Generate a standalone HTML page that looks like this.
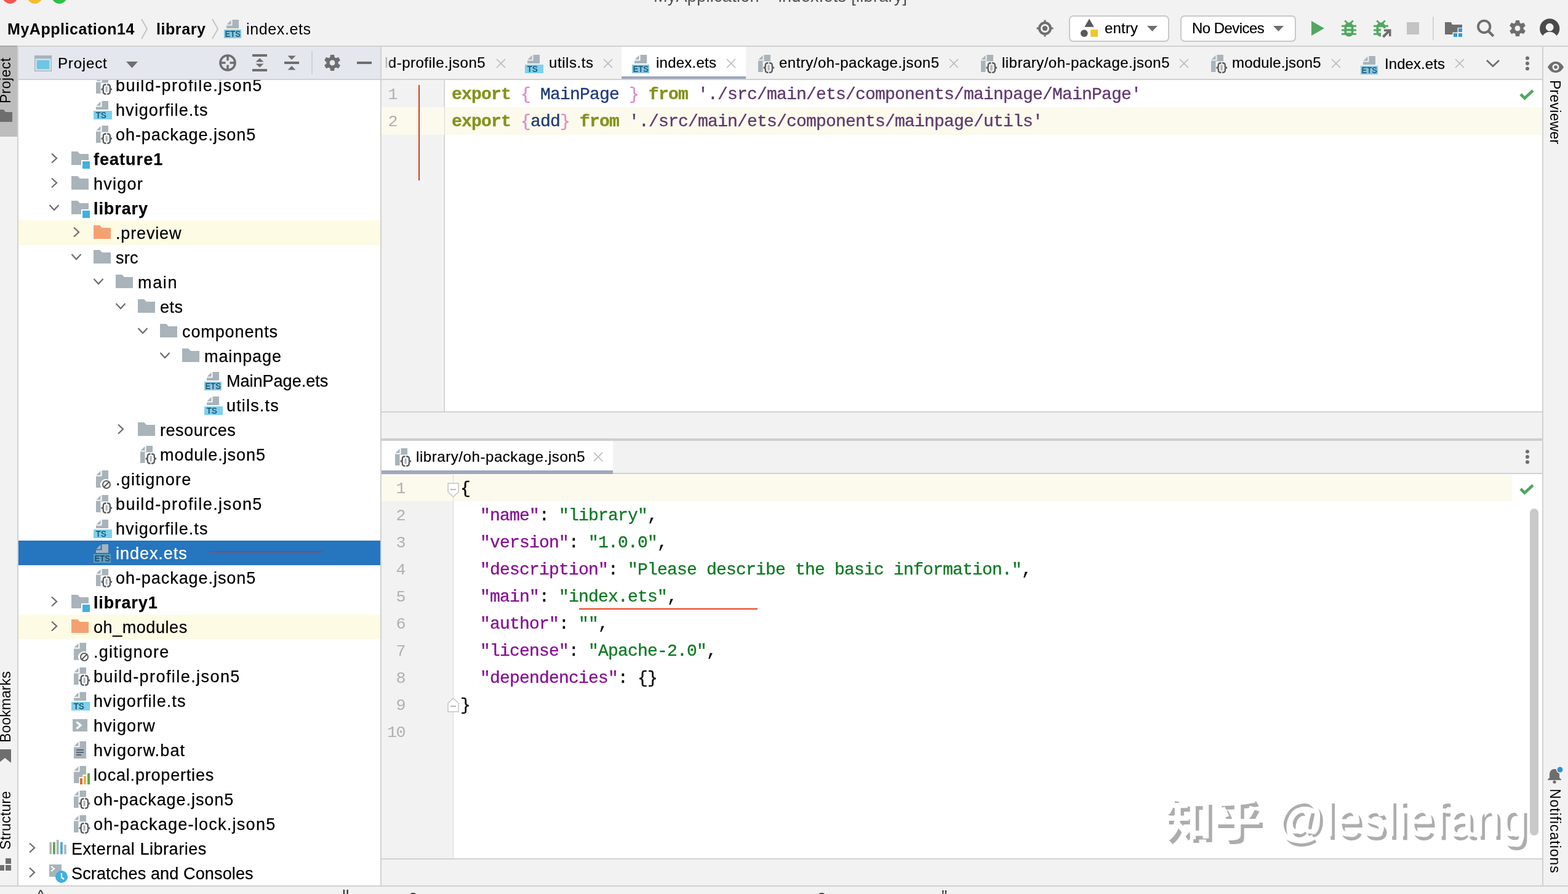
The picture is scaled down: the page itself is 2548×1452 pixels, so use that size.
<!DOCTYPE html>
<html><head><meta charset="utf-8"><title>DevEco</title><style>
html,body{margin:0;padding:0}
body{width:2548px;height:1452px;overflow:hidden;position:relative;background:#f2f2f2;filter:opacity(1);font-family:"Liberation Sans",sans-serif;color:#000}
.t{position:absolute;white-space:nowrap;transform:translateY(-50%);line-height:1;font-size:26px}
.b{font-weight:bold}
.w{color:#fff}
.ic{position:absolute;overflow:visible}
.hl{position:absolute;background:#d1d1d1}
.vl{position:absolute;background:#d1d1d1}
.title{color:#4f4f4f;font-size:27px}
.nav{font-size:25px}
.tb{font-size:24px;-webkit-text-stroke:0.200px}
.ui{font-size:24px;-webkit-text-stroke:0.200px}
.tree{font-size:27px;margin-top:1px;-webkit-text-stroke:0.250px}
.strip{font-size:23px}
.combo{position:absolute;box-sizing:border-box;background:#fff;border:2px solid #c8c8c8;border-radius:7px}
#tree{position:absolute;left:30px;top:130px;width:588px;height:1308px;overflow:hidden}
#tabs1{position:absolute;left:620px;top:76px;width:1886px;height:52px;overflow:hidden}
#tabs2{position:absolute;left:620px;top:716px;width:1886px;height:54px;overflow:hidden}
#ed1{position:absolute;left:620px;top:130px;width:1886px;height:538px;background:#fff;overflow:hidden}
#ed2{position:absolute;left:620px;top:771px;width:1886px;height:623px;background:#fff;overflow:hidden}
.ln{position:absolute;transform:translateY(-50%);line-height:1;font-family:"Liberation Mono",monospace;font-size:26.660px;letter-spacing:-1.500px;color:#b0b0b0;text-align:right}
.code{position:absolute;white-space:pre;transform:translateY(-50%);line-height:1;font-family:"Liberation Mono",monospace;font-size:28px;letter-spacing:-0.803px;color:#080808;-webkit-text-stroke:0.350px}
.code i{font-style:normal}
.k{color:#85911b;font-weight:bold}
.br{color:#e18cc4}
.id{color:#1f3a7a}
.s{color:#5f3a6e}
.jk{color:#871094}
.js{color:#0f7a24}
.wm{font-size:76px;color:#fff;text-shadow:5.500px 6px 0 #adadad;-webkit-text-stroke:1.600px #fff;transform:translateY(-50%) scaleY(1.08)}
#bottom{position:absolute;left:0;top:1440px;width:2548px;height:12px;overflow:hidden}
#bottom span{position:absolute;top:2px;font-size:26px;line-height:1;color:#333}
</style></head><body>

<svg width="0" height="0" style="position:absolute">
<defs>
<symbol id="i-folder" viewBox="0 0 32 32"><path d="M2 4h10.2l3.6 4H30v18H2z" fill="#a9b3ba"/></symbol>
<symbol id="i-folder-o" viewBox="0 0 32 32"><path d="M2 4h10.2l3.6 4H30v18H2z" fill="#f4a171"/></symbol>
<symbol id="i-module" viewBox="0 0 32 32"><path d="M2 4h10.2l3.6 4H30v10H18v8H2z" fill="#a9b3ba"/><rect x="20" y="20" width="12" height="12" fill="#3fb1e0"/></symbol>
<symbol id="i-sheet" viewBox="0 0 32 32"><path d="M11.500 2.800 4.500 9.800h7z" fill="#a9b3ba"/><path d="M13.500 2v9.500H4V30h20V2z" fill="#a9b3ba"/></symbol>
<symbol id="i-json" viewBox="0 0 32 32"><path d="M11.500 2.800 4.500 9.800h7z" fill="#a9b3ba"/><path d="M13.500 2v9.500H4V30h7.500V12.600H24V2z" fill="#a9b3ba"/>
 <path d="M20.500 15.300c-3.200 0-4.700 1-4.700 3.500v2.200c0 1.300-1 2-3.300 2 2.300 0 3.300.700 3.300 2v2.200c0 2.500 1.500 3.500 4.700 3.500M22.100 15.300c3.200 0 4.700 1 4.700 3.500v2.200c0 1.300 1 2 3.300 2-2.300 0-3.300.700-3.300 2v2.200c0 2.500-1.500 3.500-4.700 3.500" fill="none" stroke="#5a5a5a" stroke-width="2.400"/><path d="M19.500 18.500h3.200v9h-3.200z" fill="#aab4c0"/></symbol>
<symbol id="i-ts" viewBox="0 0 32 32"><path d="M11.500 2.800 4.500 9.800h7z" fill="#a9b3ba"/><path d="M13.500 2v9.500H4V16h20V2z" fill="#a9b3ba"/><rect x="0" y="18" width="30" height="14" fill="#7fd0ee"/>
 <text x="3.500" y="30" font-family="Liberation Sans, sans-serif" font-weight="bold" font-size="14.500" fill="#1d5f7c" textLength="17.500" lengthAdjust="spacingAndGlyphs">TS</text></symbol>
<symbol id="i-ets" viewBox="0 0 32 32"><path d="M11.500 2.800 4.500 9.800h7z" fill="#a9b3ba"/><path d="M13.500 2v9.500H4V16h20V2z" fill="#a9b3ba"/><rect x="0" y="18" width="28" height="14" fill="#89c6e0"/>
 <text x="1.500" y="30" font-family="Liberation Sans, sans-serif" font-weight="bold" font-size="14.500" fill="#1d5f7c" textLength="25.500" lengthAdjust="spacingAndGlyphs">ETS</text></symbol>
<symbol id="i-ets-sel" viewBox="0 0 32 32"><path d="M11.500 2.800 4.500 9.800h7z" fill="#a9b3ba"/><path d="M13.500 2v9.500H4V16h20V2z" fill="#a9b3ba"/><rect x="0" y="18" width="28" height="14" fill="#5e9fc0"/>
 <text x="1.500" y="30" font-family="Liberation Sans, sans-serif" font-weight="bold" font-size="14.500" fill="#1f4e6a" textLength="25.500" lengthAdjust="spacingAndGlyphs">ETS</text></symbol>
<symbol id="i-ignore" viewBox="0 0 32 32"><path d="M11.500 2.800 4.500 9.800h7z" fill="#a9b3ba"/><path d="M13.500 2v9.500H4V30h8.500a9 9 0 0 1 11.500-13V2z" fill="#a9b3ba"/>
 <circle cx="21" cy="25" r="6" fill="#fff" stroke="#5a5a5a" stroke-width="2"/><path d="M17 29l8-8" stroke="#5a5a5a" stroke-width="2.200"/></symbol>
<symbol id="i-shell" viewBox="0 0 32 32"><rect x="2" y="6" width="24" height="20" fill="#a9b3ba"/><path d="M8.500 10.500l6.500 5.500-6.500 5.500" fill="none" stroke="#fff" stroke-width="3.200"/></symbol>
<symbol id="i-text" viewBox="0 0 32 32"><path d="M11.500 2.800 4.500 9.800h7z" fill="#a9b3ba"/><path d="M13.500 2v9.500H4V30h20V2z" fill="#a9b3ba"/><path d="M8 15h12v2H8zM8 19h12v2H8zM8 23h8v2H8z" fill="#5a6670"/></symbol>
<symbol id="i-props" viewBox="0 0 32 32"><path d="M11.500 2.800 4.500 9.800h7z" fill="#a9b3ba"/><path d="M13.500 2v9.500H4V30h8.500V20h6v-4h5.500V2z" fill="#a9b3ba"/>
 <rect x="14" y="22" width="4" height="10" fill="#e0692d"/><rect x="20" y="18" width="4" height="14" fill="#f2b04a"/><rect x="26" y="14" width="4" height="18" fill="#62a744"/></symbol>
<symbol id="i-libs" viewBox="0 0 32 32"><rect x="2.500" y="5.700" width="3.500" height="19.700" fill="#a9b3ba"/><rect x="8" y="5.700" width="3.800" height="19.700" fill="#62a744"/><rect x="13.800" y="2" width="3.800" height="23.400" fill="#a9b3ba"/><rect x="20" y="5.700" width="3.800" height="19.700" fill="#4aa7d8"/><rect x="26.300" y="10" width="3.400" height="15.400" fill="#a9b3ba"/></symbol>
<symbol id="i-scratch" viewBox="0 0 32 32"><path d="M2 2h20v12h-6v8H2z" fill="#a9b3ba"/><path d="M5 5l5 4-5 4" fill="none" stroke="#fff" stroke-width="2"/><circle cx="22" cy="22" r="10" fill="#3fb1e0"/><path d="M22 16v7l4 3" fill="none" stroke="#fff" stroke-width="2.200"/></symbol>
<symbol id="i-chev-r" viewBox="0 0 32 32"><path d="M12 8.500l8 7.500-8 7.500" fill="none" stroke="#6e6e6e" stroke-width="2.300"/></symbol>
<symbol id="i-chev-d" viewBox="0 0 32 32"><path d="M8.500 12l7.500 8 7.500-8" fill="none" stroke="#6e6e6e" stroke-width="2.300"/></symbol>
<symbol id="i-close" viewBox="0 0 16 16"><path d="M1 1l14 14M15 1 1 15" stroke="#b8b8b8" stroke-width="1.600" fill="none"/></symbol>
<symbol id="i-gear" viewBox="0 0 32 32"><path fill="#6e6e6e" fill-rule="evenodd" stroke="#6e6e6e" stroke-width="1.500" stroke-linejoin="round" d="M12.17 5.48L12.99 0.49L19.01 0.49L19.83 5.48L23.20 7.42L27.92 5.63L30.94 10.86L27.03 14.06L27.03 17.94L30.94 21.14L27.92 26.37L23.20 24.58L19.83 26.52L19.01 31.51L12.99 31.51L12.17 26.52L8.80 24.58L4.08 26.37L1.06 21.14L4.97 17.94L4.97 14.06L1.06 10.86L4.08 5.63L8.80 7.42zM16 9.800a6.200 6.200 0 1 0 0 12.400 6.200 6.200 0 0 0 0-12.400z"/></symbol>
</defs></svg>
<div id="titlebar"></div>
<div style="position:absolute;left:3.5px;top:-19.300px;width:25px;height:25px;border-radius:50%;background:#f25850"></div>
<div style="position:absolute;left:43.5px;top:-19.300px;width:25px;height:25px;border-radius:50%;background:#f7bc2d"></div>
<div style="position:absolute;left:83.5px;top:-19.300px;width:25px;height:25px;border-radius:50%;background:#2ac33f"></div>
<span class="t title" id="t0" style="left:1062px;top:-6px;letter-spacing:0.29px">MyApplication – index.ets [library]</span>
<span class="t nav b" id="t1" style="left:12px;top:47px;letter-spacing:0.55px">MyApplication14</span>
<svg class="ic" style="left:228px;top:30px" width="14" height="34"><path d="M2 1l9 16-9 16" fill="none" stroke="#c4c4c4" stroke-width="2"/></svg>
<span class="t nav b" id="t2" style="left:254px;top:47px;letter-spacing:0.57px">library</span>
<svg class="ic" style="left:343px;top:30px" width="14" height="34"><path d="M2 1l9 16-9 16" fill="none" stroke="#c4c4c4" stroke-width="2"/></svg>
<svg class="ic" style="left:364px;top:30px" width="32" height="32" ><use href="#i-ets"/></svg>
<span class="t nav" id="t3" style="left:400px;top:47px;letter-spacing:0.63px">index.ets</span>
<svg class="ic" style="left:1682px;top:30px" width="32" height="32" viewBox="0 0 32 32"><circle cx="16" cy="16" r="9" fill="none" stroke="#6e6e6e" stroke-width="4"/><circle cx="16" cy="16" r="4.100" fill="#6e6e6e"/><path d="M16 2.500v3M16 26.500v3M2.500 16h3M26.500 16h3" stroke="#6e6e6e" stroke-width="3"/></svg>
<div class="combo" style="left:1736.500px;top:24.500px;width:163px;height:43px"></div>
<svg class="ic" style="left:1755px;top:30px" width="32" height="32" viewBox="0 0 32 32"><path d="M15 .600l7.800 13.200H7.300z" fill="#58585a"/><circle cx="6.800" cy="24.100" r="5.900" fill="#58585a"/><rect x="17.200" y="18" width="11.800" height="11.800" fill="#f4c430"/></svg>
<span class="t tb" id="t4" style="left:1795px;top:46px;letter-spacing:0.18px">entry</span>
<svg class="ic" style="left:1863.500px;top:42.400px" width="17" height="9"><path d="M0 0h17l-8.500 9z" fill="#6e6e6e"/></svg>
<div class="combo" style="left:1918px;top:24.500px;width:187.500px;height:43px"></div>
<span class="t tb" id="t5" style="left:1937px;top:46px;letter-spacing:-0.54px">No Devices</span>
<svg class="ic" style="left:2069px;top:42.400px" width="17" height="9"><path d="M0 0h17l-8.500 9z" fill="#6e6e6e"/></svg>
<svg class="ic" style="left:2130px;top:33px" width="24" height="26"><path d="M1 1l21 12L1 25z" fill="#53a762"/></svg>
<svg class="ic" style="left:2180px;top:32px" width="24" height="28" viewBox="0 0 24 28"><g fill="#53a762"><path d="M5.300 1.500l5.500 5.500M18.700 1.500l-5.500 5.500" stroke="#53a762" stroke-width="3" fill="none"/><path d="M4.500 12a7.500 7.500 0 0 1 15 0v8a7.500 7.500 0 0 1-15 0z"/><path d="M0 8.700h24v3H0zM0 15.500h24v3H0zM0 21.800h24v3H0z"/></g><path d="M8.200 12h7.500v2.800H8.200zM8.200 18.400h7.500v2.800H8.200z" fill="#d6f3da"/></svg>
<svg class="ic" style="left:2232px;top:32px" width="30" height="30" viewBox="0 0 30 30"><g fill="#53a762"><path d="M5.300 1.500l5.500 5.500M18.700 1.500l-5.500 5.500" stroke="#53a762" stroke-width="3" fill="none"/><path d="M4.500 12a7.500 7.500 0 0 1 15 0v8a7.500 7.500 0 0 1-15 0z"/><path d="M0 8.700h24v3H0zM0 15.500h24v3H0zM0 21.800h24v3H0z"/></g><path d="M8.200 12h7.500v2.800H8.200zM8.200 18.400h7.500v2.800H8.200z" fill="#d6f3da"/><rect x="12" y="14" width="18" height="16" fill="#f2f2f2"/><path d="M15.500 28l11-11" stroke="#6e6e6e" stroke-width="4"/><path d="M17 15.500h11.500V27h-3.500v-8H17z" fill="#6e6e6e"/></svg>
<div style="position:absolute;left:2286px;top:36px;width:20px;height:20px;background:#c4c4c4"></div>
<div style="position:absolute;left:2328px;top:27px;width:2px;height:38px;background:#d4d4d4"></div>
<svg class="ic" style="left:2348px;top:36px" width="28" height="24" viewBox="0 0 28 24"><path d="M0 0h10l2 4h16v5H20.500v7.500H12.500V20H0z" fill="#6e6e6e"/><g fill="#3b97cf"><rect x="22" y="10" width="6" height="6"/><rect x="14" y="18" width="6" height="6"/><rect x="22" y="18" width="6" height="6"/></g></svg>
<svg class="ic" style="left:2398px;top:30px" width="32" height="32" viewBox="0 0 32 32"><circle cx="13.700" cy="13.300" r="9.700" fill="none" stroke="#6e6e6e" stroke-width="3.800"/><path d="M20.800 20.800l8 8" stroke="#6e6e6e" stroke-width="4.200"/></svg>
<svg class="ic" style="left:2453px;top:33px" width="26" height="26" ><use href="#i-gear"/></svg>
<svg class="ic" style="left:2502px;top:30px" width="33" height="33" viewBox="0 0 33 33"><defs><clipPath id="avc"><rect x="-2" y="-2" width="38" height="37"/></clipPath></defs><circle cx="16.200" cy="16.400" r="16.100" fill="#4a4a4a"/><g clip-path="url(#avc)" fill="#f2f2f2"><circle cx="16.200" cy="14.200" r="6.400"/><ellipse cx="16.200" cy="33.400" rx="12.500" ry="11.600"/></g></svg>
<div class="hl" style="left:0;top:74px;width:2548px;height:2px"></div>
<div style="position:absolute;left:0;top:76px;width:28px;height:1362px;background:#f2f2f2"></div>
<div style="position:absolute;left:0;top:76px;width:28px;height:146px;background:#bdbdbd"></div>
<div style="position:absolute;left:0;top:74px;width:28px;height:2px;background:#a9a9a9"></div>
<div class="vl" style="left:28px;top:76px;width:2px;height:1362px"></div>
<span class="t strip" id="t6" style="left:9px;top:168px;transform-origin:0 50%;transform:translateY(-50%) rotate(-90deg);letter-spacing:0.41px">Project</span>
<svg class="ic" style="left:-4px;top:176px" width="26" height="24"><path d="M0 2h10l3 4h11v16H0z" fill="#6e6e6e"/></svg>
<span class="t strip" id="t7" style="left:9px;top:1206px;transform-origin:0 50%;transform:translateY(-50%) rotate(-90deg);letter-spacing:0.08px">Bookmarks</span>
<svg class="ic" style="left:-2px;top:1217px" width="22" height="24"><path d="M0 0h20v22l-10-8-10 8z" fill="#6e6e6e"/></svg>
<span class="t strip" id="t8" style="left:9px;top:1380px;transform-origin:0 50%;transform:translateY(-50%) rotate(-90deg);letter-spacing:0.22px">Structure</span>
<svg class="ic" style="left:0px;top:1394px" width="22" height="22"><rect x="9" y="0" width="9" height="9" fill="#6e6e6e"/><rect x="0" y="11" width="7" height="9" fill="#6e6e6e"/><rect x="9" y="11" width="9" height="9" fill="#6e6e6e"/></svg>
<div style="position:absolute;left:30px;top:76px;width:588px;height:1362px;background:#fff"></div>
<div style="position:absolute;left:30px;top:76px;width:588px;height:52px;background:#e4e7ee"></div>
<div class="hl" style="left:30px;top:128px;width:588px;height:2px;background:#d0d2d8"></div>
<svg class="ic" style="left:56px;top:90px" width="28" height="26"><rect x="0" y="0" width="28" height="26" fill="#a9b3ba"/><rect x="2.500" y="6.500" width="23" height="17" fill="#6ec6e2" stroke="#dfe8ee" stroke-width="2"/></svg>
<span class="t ui" id="t9" style="left:94px;top:103px;letter-spacing:0.82px">Project</span>
<svg class="ic" style="left:205px;top:100px" width="20" height="11"><path d="M0 0h19l-9.500 10.500z" fill="#6e6e6e"/></svg>
<svg class="ic" style="left:355px;top:87px" width="30" height="30" viewBox="0 0 30 30"><circle cx="15" cy="15" r="12" fill="none" stroke="#6e6e6e" stroke-width="3.600"/><path d="M15 3v8.500M15 18.500v8.500M3 15h8.500M18.500 15h8.500" stroke="#6e6e6e" stroke-width="3.600"/></svg>
<svg class="ic" style="left:410px;top:88px" width="24" height="28" viewBox="0 0 24 28"><path d="M0 0h24v4H0zM0 24h24v4H0z" fill="#6e6e6e"/><path d="M12 6.500l6.500 6h-13zM12 21.500l6.500-6h-13z" fill="#6e6e6e"/></svg>
<svg class="ic" style="left:462px;top:88px" width="24" height="28" viewBox="0 0 24 28"><path d="M0 12h24v4H0z" fill="#6e6e6e"/><path d="M12 9l6.500-6.500h-13zM12 19l6.500 6.500h-13z" fill="#6e6e6e"/></svg>
<div style="position:absolute;left:506px;top:83px;width:2px;height:38px;background:#d0d2d8"></div>
<svg class="ic" style="left:527px;top:89px" width="26" height="26" ><use href="#i-gear"/></svg>
<div style="position:absolute;left:580px;top:100px;width:24px;height:4px;background:#6e6e6e"></div>
<div id="tree">
<svg class="ic" style="left:122px;top:-8px" width="32" height="32" ><use href="#i-json"/></svg>
<span class="t tree" id="t10" style="left:158px;top:8px;letter-spacing:1.43px">build-profile.json5</span>
<svg class="ic" style="left:122px;top:32px" width="32" height="32" ><use href="#i-ts"/></svg>
<span class="t tree" id="t11" style="left:158px;top:48px;letter-spacing:1.07px">hvigorfile.ts</span>
<svg class="ic" style="left:122px;top:72px" width="32" height="32" ><use href="#i-json"/></svg>
<span class="t tree" id="t12" style="left:158px;top:88px;letter-spacing:0.94px">oh-package.json5</span>
<svg class="ic" style="left:84px;top:112px" width="32" height="32" ><use href="#i-module"/></svg>
<svg class="ic" style="left:42px;top:111px" width="32" height="32" ><use href="#i-chev-r"/></svg>
<span class="t tree b" id="t13" style="left:122px;top:128px;letter-spacing:1.02px">feature1</span>
<svg class="ic" style="left:84px;top:152px" width="32" height="32" ><use href="#i-folder"/></svg>
<svg class="ic" style="left:42px;top:151px" width="32" height="32" ><use href="#i-chev-r"/></svg>
<span class="t tree" id="t14" style="left:122px;top:168px;letter-spacing:1.25px">hvigor</span>
<svg class="ic" style="left:84px;top:192px" width="32" height="32" ><use href="#i-module"/></svg>
<svg class="ic" style="left:42px;top:191px" width="32" height="32" ><use href="#i-chev-d"/></svg>
<span class="t tree b" id="t15" style="left:122px;top:208px;letter-spacing:0.91px">library</span>
<div style="position:absolute;left:0;top:228px;width:588px;height:40px;background:#fdfbe4"></div>
<svg class="ic" style="left:120px;top:232px" width="32" height="32" ><use href="#i-folder-o"/></svg>
<svg class="ic" style="left:78px;top:231px" width="32" height="32" ><use href="#i-chev-r"/></svg>
<span class="t tree" id="t16" style="left:158px;top:248px;letter-spacing:0.84px">.preview</span>
<svg class="ic" style="left:120px;top:272px" width="32" height="32" ><use href="#i-folder"/></svg>
<svg class="ic" style="left:78px;top:271px" width="32" height="32" ><use href="#i-chev-d"/></svg>
<span class="t tree" id="t17" style="left:158px;top:288px;letter-spacing:0.23px">src</span>
<svg class="ic" style="left:156px;top:312px" width="32" height="32" ><use href="#i-folder"/></svg>
<svg class="ic" style="left:114px;top:311px" width="32" height="32" ><use href="#i-chev-d"/></svg>
<span class="t tree" id="t18" style="left:194px;top:328px;letter-spacing:1.67px">main</span>
<svg class="ic" style="left:192px;top:352px" width="32" height="32" ><use href="#i-folder"/></svg>
<svg class="ic" style="left:150px;top:351px" width="32" height="32" ><use href="#i-chev-d"/></svg>
<span class="t tree" id="t19" style="left:230px;top:368px;letter-spacing:0.55px">ets</span>
<svg class="ic" style="left:228px;top:392px" width="32" height="32" ><use href="#i-folder"/></svg>
<svg class="ic" style="left:186px;top:391px" width="32" height="32" ><use href="#i-chev-d"/></svg>
<span class="t tree" id="t20" style="left:266px;top:408px;letter-spacing:0.89px">components</span>
<svg class="ic" style="left:264px;top:432px" width="32" height="32" ><use href="#i-folder"/></svg>
<svg class="ic" style="left:222px;top:431px" width="32" height="32" ><use href="#i-chev-d"/></svg>
<span class="t tree" id="t21" style="left:302px;top:448px;letter-spacing:0.91px">mainpage</span>
<svg class="ic" style="left:302px;top:472px" width="32" height="32" ><use href="#i-ets"/></svg>
<span class="t tree" id="t22" style="left:338px;top:488px;letter-spacing:0.01px">MainPage.ets</span>
<svg class="ic" style="left:302px;top:512px" width="32" height="32" ><use href="#i-ts"/></svg>
<span class="t tree" id="t23" style="left:338px;top:528px;letter-spacing:1.17px">utils.ts</span>
<svg class="ic" style="left:192px;top:552px" width="32" height="32" ><use href="#i-folder"/></svg>
<svg class="ic" style="left:150px;top:551px" width="32" height="32" ><use href="#i-chev-r"/></svg>
<span class="t tree" id="t24" style="left:230px;top:568px;letter-spacing:0.53px">resources</span>
<svg class="ic" style="left:194px;top:592px" width="32" height="32" ><use href="#i-json"/></svg>
<span class="t tree" id="t25" style="left:230px;top:608px;letter-spacing:0.94px">module.json5</span>
<svg class="ic" style="left:122px;top:632px" width="32" height="32" ><use href="#i-ignore"/></svg>
<span class="t tree" id="t26" style="left:158px;top:648px;letter-spacing:1.23px">.gitignore</span>
<svg class="ic" style="left:122px;top:672px" width="32" height="32" ><use href="#i-json"/></svg>
<span class="t tree" id="t27" style="left:158px;top:688px;letter-spacing:1.43px">build-profile.json5</span>
<svg class="ic" style="left:122px;top:712px" width="32" height="32" ><use href="#i-ts"/></svg>
<span class="t tree" id="t28" style="left:158px;top:728px;letter-spacing:1.07px">hvigorfile.ts</span>
<div style="position:absolute;left:0;top:748px;width:588px;height:40px;background:#2675bf"></div>
<svg class="ic" style="left:122px;top:752px" width="32" height="32" ><use href="#i-ets-sel"/></svg>
<span class="t tree w" id="t29" style="left:158px;top:768px;letter-spacing:0.96px">index.ets</span>
<div style="position:absolute;left:310px;top:765px;width:184px;height:2px;background:#c8323c"></div>
<svg class="ic" style="left:122px;top:792px" width="32" height="32" ><use href="#i-json"/></svg>
<span class="t tree" id="t30" style="left:158px;top:808px;letter-spacing:0.94px">oh-package.json5</span>
<svg class="ic" style="left:84px;top:832px" width="32" height="32" ><use href="#i-module"/></svg>
<svg class="ic" style="left:42px;top:831px" width="32" height="32" ><use href="#i-chev-r"/></svg>
<span class="t tree b" id="t31" style="left:122px;top:848px;letter-spacing:0.87px">library1</span>
<div style="position:absolute;left:0;top:868px;width:588px;height:40px;background:#fdfbe4"></div>
<svg class="ic" style="left:84px;top:872px" width="32" height="32" ><use href="#i-folder-o"/></svg>
<svg class="ic" style="left:42px;top:871px" width="32" height="32" ><use href="#i-chev-r"/></svg>
<span class="t tree" id="t32" style="left:122px;top:888px;letter-spacing:0.56px">oh_modules</span>
<svg class="ic" style="left:86px;top:912px" width="32" height="32" ><use href="#i-ignore"/></svg>
<span class="t tree" id="t33" style="left:122px;top:928px;letter-spacing:1.23px">.gitignore</span>
<svg class="ic" style="left:86px;top:952px" width="32" height="32" ><use href="#i-json"/></svg>
<span class="t tree" id="t34" style="left:122px;top:968px;letter-spacing:1.43px">build-profile.json5</span>
<svg class="ic" style="left:86px;top:992px" width="32" height="32" ><use href="#i-ts"/></svg>
<span class="t tree" id="t35" style="left:122px;top:1008px;letter-spacing:1.07px">hvigorfile.ts</span>
<svg class="ic" style="left:86px;top:1032px" width="32" height="32" ><use href="#i-shell"/></svg>
<span class="t tree" id="t36" style="left:122px;top:1048px;letter-spacing:1.13px">hvigorw</span>
<svg class="ic" style="left:86px;top:1072px" width="32" height="32" ><use href="#i-text"/></svg>
<span class="t tree" id="t37" style="left:122px;top:1088px;letter-spacing:1.15px">hvigorw.bat</span>
<svg class="ic" style="left:86px;top:1112px" width="32" height="32" ><use href="#i-props"/></svg>
<span class="t tree" id="t38" style="left:122px;top:1128px;letter-spacing:0.81px">local.properties</span>
<svg class="ic" style="left:86px;top:1152px" width="32" height="32" ><use href="#i-json"/></svg>
<span class="t tree" id="t39" style="left:122px;top:1168px;letter-spacing:0.94px">oh-package.json5</span>
<svg class="ic" style="left:86px;top:1192px" width="32" height="32" ><use href="#i-json"/></svg>
<span class="t tree" id="t40" style="left:122px;top:1208px;letter-spacing:1.25px">oh-package-lock.json5</span>
<svg class="ic" style="left:48px;top:1232px" width="32" height="32" ><use href="#i-libs"/></svg>
<svg class="ic" style="left:6px;top:1231px" width="32" height="32" ><use href="#i-chev-r"/></svg>
<span class="t tree" id="t41" style="left:86px;top:1248px;letter-spacing:0.54px">External Libraries</span>
<svg class="ic" style="left:48px;top:1272px" width="32" height="32" ><use href="#i-scratch"/></svg>
<svg class="ic" style="left:6px;top:1271px" width="32" height="32" ><use href="#i-chev-r"/></svg>
<span class="t tree" id="t42" style="left:86px;top:1288px;letter-spacing:0.14px">Scratches and Consoles</span>
</div>
<div class="vl" style="left:618px;top:76px;width:2px;height:1362px"></div>
<div id="tabs1">
<span class="t ui" id="t43" style="left:5px;top:26px;letter-spacing:0.50px">ld-profile.json5</span><svg class="ic" style="left:186px;top:19px" width="16" height="16" ><use href="#i-close"/></svg>
<svg class="ic" style="left:233px;top:11px" width="32" height="32" ><use href="#i-ts"/></svg><span class="t ui" id="t44" style="left:272px;top:26px;letter-spacing:0.56px">utils.ts</span><svg class="ic" style="left:360px;top:19px" width="16" height="16" ><use href="#i-close"/></svg>
<div style="position:absolute;left:390px;top:0;width:202px;height:52px;background:#fff"></div><div style="position:absolute;left:390px;top:48px;width:202px;height:5px;background:#9da7bc"></div><svg class="ic" style="left:407px;top:11px" width="32" height="32" ><use href="#i-ets"/></svg><span class="t ui" id="t45" style="left:446px;top:26px;letter-spacing:0.24px">index.ets</span><svg class="ic" style="left:560px;top:19px" width="16" height="16" ><use href="#i-close"/></svg>
<svg class="ic" style="left:608px;top:11px" width="32" height="32" ><use href="#i-json"/></svg><span class="t ui" id="t46" style="left:646px;top:26px;letter-spacing:0.50px">entry/oh-package.json5</span><svg class="ic" style="left:922px;top:19px" width="16" height="16" ><use href="#i-close"/></svg>
<svg class="ic" style="left:970px;top:11px" width="32" height="32" ><use href="#i-json"/></svg><span class="t ui" id="t47" style="left:1008px;top:26px;letter-spacing:0.48px">library/oh-package.json5</span><svg class="ic" style="left:1296px;top:19px" width="16" height="16" ><use href="#i-close"/></svg>
<svg class="ic" style="left:1344px;top:11px" width="32" height="32" ><use href="#i-json"/></svg><span class="t ui" id="t48" style="left:1382px;top:26px;letter-spacing:0.17px">module.json5</span><svg class="ic" style="left:1543px;top:19px" width="16" height="16" ><use href="#i-close"/></svg>
<svg class="ic" style="left:1591px;top:13px" width="32" height="32" ><use href="#i-ets"/></svg><span class="t ui" id="t49" style="left:1630px;top:28px;letter-spacing:0.08px">Index.ets</span><svg class="ic" style="left:1744px;top:19px" width="16" height="16" ><use href="#i-close"/></svg>
<div style="position:absolute;left:0;top:0;width:16px;height:52px;background:linear-gradient(90deg,#f2f2f2 30%,rgba(242,242,242,0))"></div>
<svg class="ic" style="left:1794px;top:20px" width="24" height="14"><path d="M2 2l10 9.500L22 2" fill="none" stroke="#6e6e6e" stroke-width="2.800"/></svg>
<svg class="ic" style="left:1858px;top:15px" width="8" height="28"><circle cx="4" cy="3.500" r="3" fill="#6e6e6e"/><circle cx="4" cy="12" r="3" fill="#6e6e6e"/><circle cx="4" cy="20.500" r="3" fill="#6e6e6e"/></svg>
</div>
<div class="hl" style="left:620px;top:128px;width:1886px;height:2px"></div>
<div id="ed1">
<div style="position:absolute;left:0;top:0;width:102px;height:538px;background:#f2f2f2"></div>
<div style="position:absolute;left:101px;top:0;width:2px;height:538px;background:#d6d6d6"></div>
<div style="position:absolute;left:0;top:44px;width:102px;height:45px;background:#fcfaed"></div>
<div style="position:absolute;left:103px;top:44px;width:1783px;height:45px;background:#fcfaed"></div>
<span class="ln" style="left:0;width:25px;top:24px">1</span><span class="ln" style="left:0;width:25px;top:68px">2</span>
<div style="position:absolute;left:60px;top:8px;width:2px;height:155px;background:#d8391a"></div>
<span class="code" style="left:114px;top:24px"><b class="k">export</b> <i class="br">{</i> <i class="id">MainPage</i> <i class="br">}</i> <b class="k">from</b> <i class="s">'./src/main/ets/components/mainpage/MainPage'</i></span>
<span class="code" style="left:114px;top:68px"><b class="k">export</b> <i class="br">{</i><i class="id">add</i><i class="br">}</i> <b class="k">from</b> <i class="s">'./src/main/ets/components/mainpage/utils'</i></span>
<svg class="ic" style="left:1849px;top:14px" width="24" height="19"><path d="M2 9l6.500 6.500L22 3" fill="none" stroke="#53a762" stroke-width="4.600"/></svg>
</div>
<div class="hl" style="left:620px;top:668px;width:1886px;height:2px"></div>
<div class="hl" style="left:620px;top:712px;width:1886px;height:4px;background:#cdcdcd"></div>
<div id="tabs2">
<div style="position:absolute;left:0;top:0;width:376px;height:48px;background:#fff"></div>
<div style="position:absolute;left:0;top:48px;width:376px;height:6px;background:#a0a8bb"></div>
<svg class="ic" style="left:18px;top:10px" width="32" height="32" ><use href="#i-json"/></svg>
<span class="t ui" id="t50" style="left:56px;top:26px;letter-spacing:0.57px">library/oh-package.json5</span>
<svg class="ic" style="left:344px;top:18px" width="16" height="16" ><use href="#i-close"/></svg>
<svg class="ic" style="left:1858px;top:14px" width="8" height="28"><circle cx="4" cy="3.500" r="3" fill="#6e6e6e"/><circle cx="4" cy="12" r="3" fill="#6e6e6e"/><circle cx="4" cy="20.500" r="3" fill="#6e6e6e"/></svg>
</div>
<div class="hl" style="left:996px;top:768px;width:1510px;height:2px"></div><div style="position:absolute;left:620px;top:770px;width:116px;height:1px;background:#f2f2f2"></div><div style="position:absolute;left:737px;top:770px;width:1769px;height:1px;background:#fff"></div>
<div id="ed2">
<div style="position:absolute;left:0;top:0;width:116px;height:623px;background:#f2f2f2"></div>
<div style="position:absolute;left:116px;top:0;width:1px;height:623px;background:#d9d9d9"></div>
<div style="position:absolute;left:0;top:0;width:116px;height:43px;background:#fcfaed"></div>
<div style="position:absolute;left:117px;top:0;width:1720px;height:43px;background:#fcfaed"></div>
<span class="ln" style="left:0;width:38px;top:23px">1</span>
<span class="ln" style="left:0;width:38px;top:67px">2</span>
<span class="ln" style="left:0;width:38px;top:111px">3</span>
<span class="ln" style="left:0;width:38px;top:155px">4</span>
<span class="ln" style="left:0;width:38px;top:199px">5</span>
<span class="ln" style="left:0;width:38px;top:243px">6</span>
<span class="ln" style="left:0;width:38px;top:287px">7</span>
<span class="ln" style="left:0;width:38px;top:331px">8</span>
<span class="ln" style="left:0;width:38px;top:375px">9</span>
<span class="ln" style="left:0;width:38px;top:419px">10</span>
<svg class="ic" style="left:107px;top:13px" width="19" height="24"><path d="M1 1h17v14l-8.500 8L1 15z" fill="#fff" stroke="#c4c4c4" stroke-width="1.500"/><path d="M5 11h9" stroke="#a8a8a8" stroke-width="1.600"/></svg>
<svg class="ic" style="left:107px;top:362px" width="19" height="24"><path d="M1 23h17V9L9.500 1 1 9z" fill="#fff" stroke="#c4c4c4" stroke-width="1.500"/><path d="M5 14h9" stroke="#a8a8a8" stroke-width="1.600"/></svg>
<span class="code" style="left:128px;top:23px">{</span>
<span class="code" style="left:128px;top:67px">  <i class="jk">"name"</i>: <i class="js">"library"</i>,</span>
<span class="code" style="left:128px;top:111px">  <i class="jk">"version"</i>: <i class="js">"1.0.0"</i>,</span>
<span class="code" style="left:128px;top:155px">  <i class="jk">"description"</i>: <i class="js">"Please describe the basic information."</i>,</span>
<span class="code" style="left:128px;top:199px">  <i class="jk">"main"</i>: <i class="js">"index.ets"</i>,</span>
<span class="code" style="left:128px;top:243px">  <i class="jk">"author"</i>: <i class="js">""</i>,</span>
<span class="code" style="left:128px;top:287px">  <i class="jk">"license"</i>: <i class="js">"Apache-2.0"</i>,</span>
<span class="code" style="left:128px;top:331px">  <i class="jk">"dependencies"</i>: {}</span>
<span class="code" style="left:128px;top:375px">}</span>
<div style="position:absolute;left:321px;top:217px;width:290px;height:2px;background:#e8431f"></div>
<svg class="ic" style="left:1849px;top:14px" width="24" height="19"><path d="M2 9l6.500 6.500L22 3" fill="none" stroke="#53a762" stroke-width="4.600"/></svg>
<div style="position:absolute;left:1866px;top:55px;width:14px;height:531px;border-radius:7px;background:#c9c9c9"></div>
<svg class="ic" style="left:1260px;top:500px" width="190" height="120" viewBox="0 0 190 120"><text transform="translate(16.7,93) scale(1,0.9345)" x="0" y="0" font-family="'Liberation Sans','Noto Sans CJK SC',sans-serif" font-weight="bold" font-size="79.4" fill="#adadad">知乎</text><text transform="translate(11.2,86.5) scale(1,0.9345)" x="0" y="0" font-family="'Liberation Sans','Noto Sans CJK SC',sans-serif" font-weight="bold" font-size="79.4" fill="#fff">知乎</text></svg>
<span class="t wm" id="t51" style="left:1453.7px;top:558px;letter-spacing:0.91px">@lesliefang</span>
</div>
<div class="hl" style="left:620px;top:1394px;width:1886px;height:2px"></div>
<div class="vl" style="left:2506px;top:76px;width:2px;height:1362px"></div>
<svg class="ic" style="left:2514px;top:99px" width="28" height="20" viewBox="0 0 28 20"><path d="M1 10C5 3 9.500 1 14 1s9 2 13 9c-4 7-8.500 9-13 9S5 17 1 10z" fill="#6e6e6e"/><circle cx="14" cy="10" r="5.500" fill="#f2f2f2"/><circle cx="14" cy="10" r="2.800" fill="#6e6e6e"/></svg>
<span class="t strip" id="t52" style="left:2526px;top:130px;transform-origin:0 50%;transform:translateY(-50%) rotate(90deg);letter-spacing:0.25px">Previewer</span>
<svg class="ic" style="left:2515px;top:1244px" width="26" height="30" viewBox="0 0 26 30"><path d="M11 5c-5 0-8 4-8 9v5l-3 3v1h22v-1l-3-3v-5c0-5-3-9-8-9z" fill="#6e6e6e"/><circle cx="11" cy="26" r="2.600" fill="#6e6e6e"/><circle cx="20" cy="6" r="6" fill="#f2f2f2"/><circle cx="20" cy="6" r="4.500" fill="#3592d4"/></svg>
<span class="t strip" id="t53" style="left:2526px;top:1281px;transform-origin:0 50%;transform:translateY(-50%) rotate(90deg);letter-spacing:0.95px">Notifications</span>
<div class="hl" style="left:0;top:1438px;width:2548px;height:2px"></div>
<div id="bottom"><span style="left:60px">^</span><span style="left:556px">ll</span><span style="left:664px">o</span><span style="left:1176px">-</span><span style="left:1328px">o</span><span style="left:1530px">"</span></div>
</body></html>
